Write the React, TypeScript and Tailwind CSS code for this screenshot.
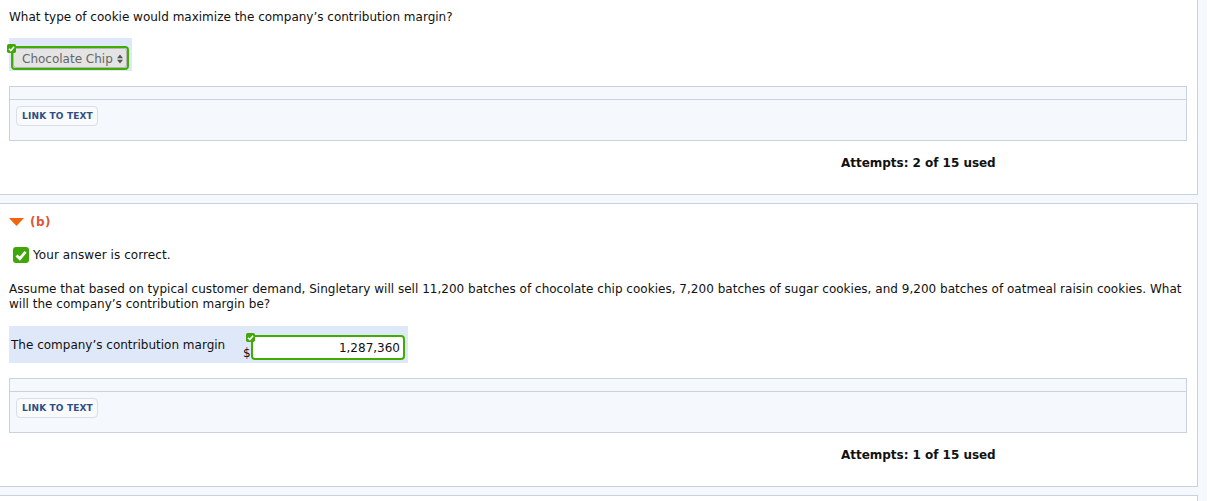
const font = "font-['DejaVu_Sans',Verdana,sans-serif]"

function Check({ className }: { className: string }) {
    return (
        <svg viewBox="0 0 16 16" className={className}>
            <rect x="0" y="0" width="16" height="16" rx="3" fill="#3fa70a" />
            <path d="M3.5 8.5 L6.8 11.6 L12.6 4.8" fill="none" stroke="#fff" strokeWidth="2.8" />
        </svg>
    )
}

function LinkPanel() {
    return (
        <div className="ml-[9px] h-[55px] w-[1178px] border border-[#c9d2e2] bg-[#f5f8fc]">
            <div className="h-[13px] border-b border-[#c9d2e2]" />
            <div className="pl-[6px] pt-[6px]">
                <button className="h-[20px] w-[82px] rounded-[4px] border border-[#d9dfe9] bg-[#f8fafc] pl-[1px] text-center text-[9px] leading-[18px] font-bold tracking-[0.15px] text-[#2f4d85]">
                    LINK TO TEXT
                </button>
            </div>
        </div>
    )
}

function Attempts({ used }: { used: number }) {
    return (
        <div className="ml-[841px] text-[12px] leading-[14px] font-bold tracking-[-0.03px] text-[#111]">
            Attempts: {used} of 15 used
        </div>
    )
}

export default function App() {
    return (
        <div className={`h-[501px] w-[1210px] overflow-hidden bg-white text-[12px] text-[#111] ${font}`}>
            <div className="h-full w-[1207px] bg-[#f5f8fc]">
                <div className="h-[195px] w-[1198px] border-r border-b border-[#c9d2e2] bg-white pt-[10px]">
                    <p className="pl-[9px] leading-[14px]">What type of cookie would maximize the company’s contribution margin?</p>
                    <div className="mt-[14px] ml-[9px] h-[33px] w-[123px] bg-[#dfe8f8] pt-[9px] pl-[2px]">
                        <div className="relative mt-[-1px] h-[24px] w-[118px] rounded-[4px] border-[2px] border-[#41ad00]">
                            <div className="flex h-full items-center justify-between rounded-[3px] border border-[#b5b5b5] bg-[#e4e4e4] pt-[1px] pr-[3px] pl-[8px] text-[#666]">
                                <span>Chocolate Chip</span>
                                <svg viewBox="0 0 8 12" className="h-[10px] w-[6px]" fill="#555">
                                    <path d="M4 0 L8 5 L0 5 Z M4 12 L8 7 L0 7 Z" />
                                </svg>
                            </div>
                            <Check className="absolute top-[-4px] left-[-6px] h-[9px] w-[9px]" />
                        </div>
                    </div>
                    <div className="mt-[15px]">
                        <LinkPanel />
                    </div>
                    <div className="mt-[15px]">
                        <Attempts used={2} />
                    </div>
                </div>

                <div className="mt-[8px] h-[284px] w-[1198px] border-t border-r border-b border-[#c9d2e2] bg-white pt-[11px]">
                    <div className="flex h-[14px] items-center pl-[9px]">
                        <svg viewBox="0 0 15 8" className="h-[8px] w-[15px]">
                            <path d="M0 0 H15 L7.5 8 Z" fill="#f3640f" />
                        </svg>
                        <span className="ml-[6px] text-[12px] font-bold tracking-[0.5px] text-[#d9573a]">(b)</span>
                    </div>
                    <div className="mt-[18px] flex items-center pl-[13px] leading-[16px]">
                        <Check className="h-[16px] w-[16px]" />
                        <span className="ml-[4px] tracking-[0.08px]">Your answer is correct.</span>
                    </div>
                    <p className="mt-[19px] w-[1185px] pl-[9px] leading-[15px] tracking-[0.02px]">
                        Assume that based on typical customer demand, Singletary will sell 11,200 batches of chocolate chip cookies, 7,200 batches of sugar cookies, and 9,200 batches of oatmeal raisin cookies. What will the company’s contribution margin be?
                    </p>
                    <div className="mt-[14px] ml-[9px] flex h-[37px] w-[399px] bg-[#dfe8f8]">
                        <div className="w-[234px] pt-[12px] pl-[2px] leading-[14px]">The company’s contribution margin</div>
                        <span className="mt-[20px] w-[8px] leading-[14px]">$</span>
                        <div className="relative mt-[9px] h-[25px] w-[154px] rounded-[4px] border-[2px] border-[#41ad00] bg-white pr-[3px] text-right leading-[22px]">
                            <Check className="absolute top-[-4px] left-[-7px] h-[9px] w-[9px]" />
                            1,287,360
                        </div>
                    </div>
                    <div className="mt-[15px]">
                        <LinkPanel />
                    </div>
                    <div className="mt-[15px]">
                        <Attempts used={1} />
                    </div>
                </div>

                <div className="mt-[8px] h-[40px] w-[1198px] border-t border-r border-[#c9d2e2] bg-white" />
            </div>
        </div>
    )
}
